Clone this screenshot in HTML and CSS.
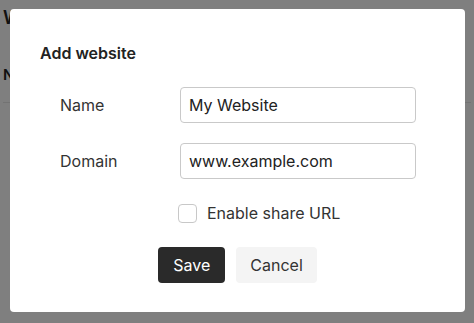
FILE: index.html
```html
<!DOCTYPE html>
<html lang="en">
<head>
<meta charset="utf-8">
<title>Add website</title>
<link rel="stylesheet" href="styles.css">
</head>
<body>
<div class="page">
  <h1 class="page-title">Websites</h1>
  <div class="table-head">Name</div>
</div>
<div class="overlay">
  <div class="modal">
    <div class="modal-title">Add website</div>
    <div class="form">
      <label class="label">Name</label>
      <input class="input" type="text" value="My Website">
      <label class="label">Domain</label>
      <input class="input" type="text" value="www.example.com">
    </div>
    <div class="check-row">
      <span class="checkbox"></span>
      <span class="check-label">Enable share URL</span>
    </div>
    <div class="buttons">
      <button class="btn btn-primary">Save</button>
      <button class="btn btn-secondary">Cancel</button>
    </div>
  </div>
</div>
</body>
</html>
```
FILE: styles.css
```css
html, body {
  margin: 0;
  padding: 0;
}
body {
  width: 474px;
  height: 323px;
  overflow: hidden;
  background: #ffffff;
  font-family: Inter, "Noto Sans", sans-serif;
  color: #222;
  position: relative;
}
.page {
  padding: 8px 3px 0;
}
.page-title {
  margin: 0;
  font-size: 18px;
  line-height: 20px;
  font-weight: 600;
}
.table-head {
  margin-top: 39px;
  font-size: 15px;
  font-weight: 600;
  line-height: 16px;
  padding-bottom: 19px;
  border-bottom: 1px solid #e6e6e6;
}
.overlay {
  position: absolute;
  inset: 0;
  background: rgba(0, 0, 0, 0.5);
  padding: 9px 0 0 10px;
  box-sizing: border-box;
}
.modal {
  width: 455px;
  box-sizing: border-box;
  background: #fff;
  border-radius: 4px;
  padding: 33px 30px 29px;
  display: flex;
  flex-direction: column;
}
.modal-title {
  font-size: 16px;
  line-height: 20px;
  font-weight: 600;
  color: #222;
  position: relative;
  top: 1px;
}
.form {
  margin-top: 25px;
  padding-left: 20px;
  display: grid;
  grid-template-columns: 120px 236px;
  row-gap: 20px;
  align-items: center;
}
.label {
  font-size: 16px;
  color: #333;
}
.input {
  box-sizing: border-box;
  height: 36px;
  width: 236px;
  margin: 0;
  border: 1px solid #c9c9c9;
  border-radius: 4px;
  padding: 0 8px;
  font-family: Inter, "Noto Sans", sans-serif;
  font-size: 16px;
  color: #222;
  background: #fff;
  outline: none;
}
.check-row {
  margin-top: 24px;
  padding-left: 138px;
  display: flex;
  align-items: center;
  gap: 10px;
  height: 20px;
}
.checkbox {
  width: 19px;
  height: 19px;
  box-sizing: border-box;
  border: 1px solid #c8c8c8;
  border-radius: 4px;
  background: #fff;
}
.check-label {
  font-size: 16px;
  color: #333;
}
.buttons {
  margin-top: 24px;
  display: flex;
  justify-content: center;
  gap: 11px;
}
.btn {
  height: 36px;
  margin: 0;
  border: none;
  border-radius: 4px;
  padding: 0 15px;
  font-family: Inter, "Noto Sans", sans-serif;
  font-size: 16px;
}
.btn-primary {
  background: #2a2a2a;
  color: #fff;
}
.btn-secondary {
  background: #f4f4f4;
  color: #333;
  padding: 0 14px;
}
```
